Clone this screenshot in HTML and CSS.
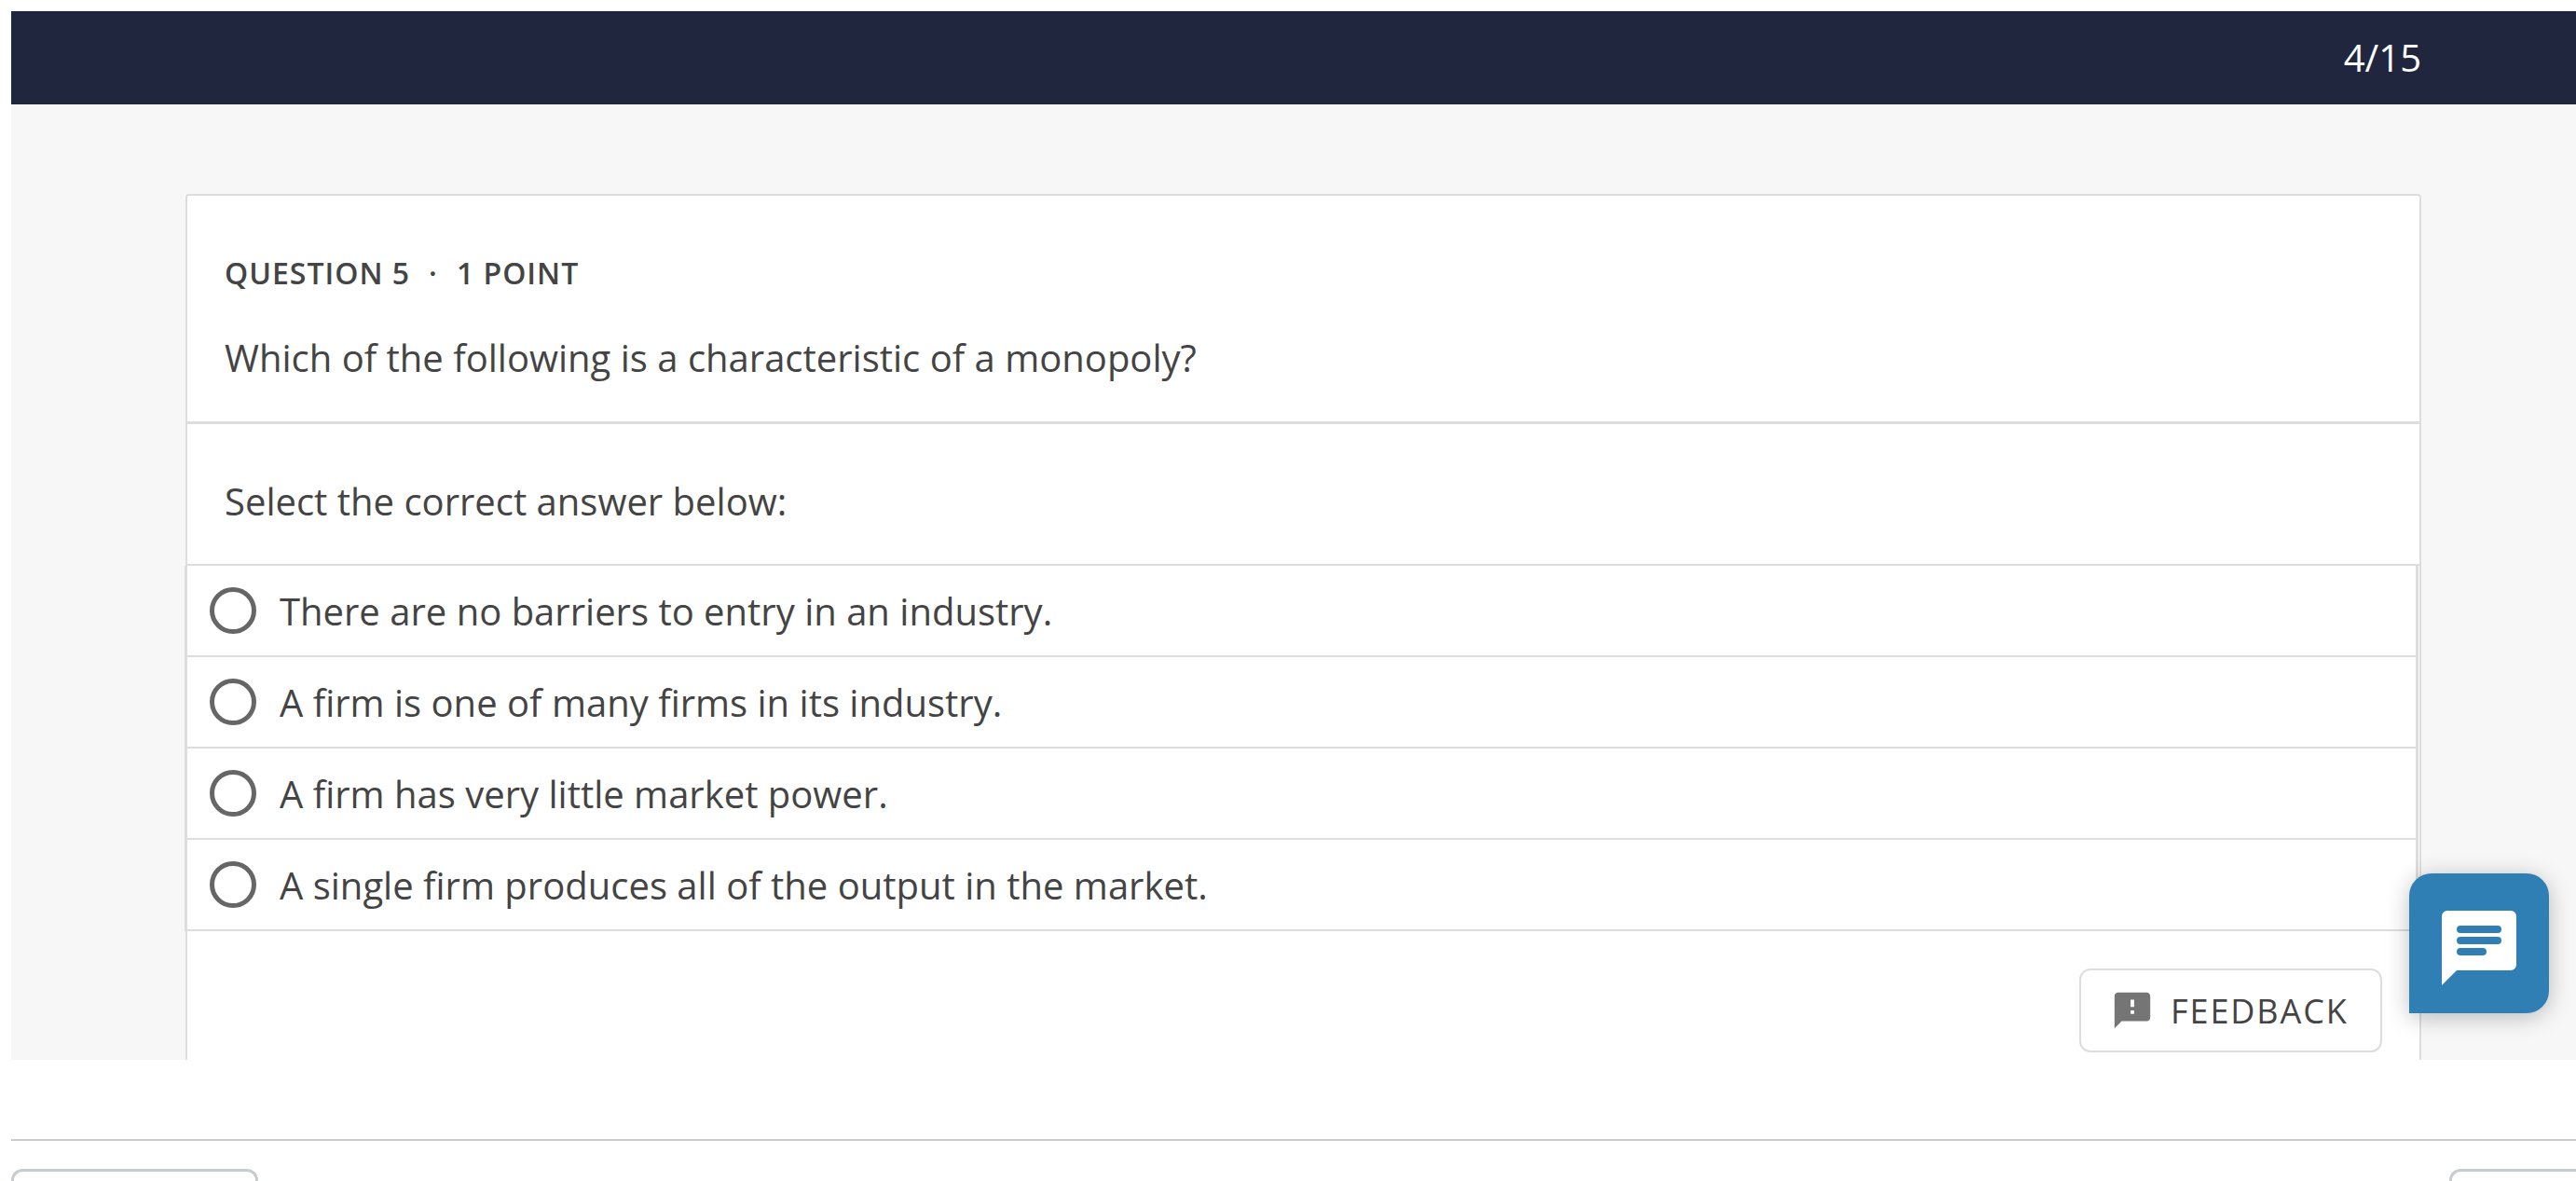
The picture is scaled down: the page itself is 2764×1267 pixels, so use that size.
FILE: index.html
```html
<!DOCTYPE html>
<html lang="en">
<head>
<meta charset="utf-8">
<title>Question 5</title>
<link rel="stylesheet" href="styles.css">
</head>
<body>
<header class="topbar"><span class="progress">4/15</span></header>
<main class="stage">
  <section class="card">
    <div class="prompt">
      <div class="eyebrow">QUESTION 5<span class="dot">·</span>1 POINT</div>
      <p class="question">Which of the following is a characteristic of a monopoly?</p>
    </div>
    <div class="instruction">Select the correct answer below:</div>
    <ul class="options">
      <li class="option"><span class="radio"></span><span>There are no barriers to entry in an industry.</span></li>
      <li class="option"><span class="radio"></span><span>A firm is one of many firms in its industry.</span></li>
      <li class="option"><span class="radio"></span><span>A firm has very little market power.</span></li>
      <li class="option"><span class="radio"></span><span>A single firm produces all of the output in the market.</span></li>
    </ul>
    <div class="actions">
      <button class="feedback" type="button">
        <svg class="feedback-icon" viewBox="0 0 24 24" aria-hidden="true"><path d="M20 2H4c-1.1 0-1.99.9-1.99 2L2 22l4-4h14c1.1 0 2-.9 2-2V4c0-1.1-.9-2-2-2zm-7 12h-2v-2h2v2zm0-4h-2V6h2v4z"/></svg>
        <span>FEEDBACK</span>
      </button>
    </div>
  </section>
</main>
<footer class="footer">
  <div class="footer-buttons">
    <button class="nav-btn nav-prev" type="button"></button>
    <button class="nav-btn nav-next" type="button"></button>
  </div>
</footer>
<button class="chat" type="button" aria-label="Chat">
  <svg class="chat-icon" viewBox="0 0 80 80" aria-hidden="true">
    <path class="bubble" d="M6 0H74a6 6 0 0 1 6 6V58a6 6 0 0 1-6 6H16L0 80V6a6 6 0 0 1 6-6z"/>
    <rect class="bar" x="16" y="16" width="48" height="8" rx="4"/>
    <rect class="bar" x="16" y="28" width="48" height="8" rx="4"/>
    <rect class="bar" x="16" y="40" width="32" height="8" rx="4"/>
  </svg>
</button>
</body>
</html>
```
FILE: styles.css
```css
* { box-sizing: border-box; }
html, body { height: 100%; }
body {
  margin: 0;
  padding: 12px 0 0 12px;
  overflow: hidden;
  background: #fff;
  color: #444;
  font-family: "Open Sans", sans-serif;
  font-size: 40px;
}
.topbar {
  height: 100px;
  background: #20263d;
  color: #fff;
  display: flex;
  align-items: center;
  justify-content: flex-end;
  padding-right: 166px;
}
.progress { font-size: 40px; line-height: 48px; }
.stage {
  height: 1025px;
  overflow: hidden;
  background: #f7f7f7;
  padding: 96px 166px 0 187px;
}
.card {
  background: #fff;
  border: 2px solid #ddd;
  border-radius: 4px;
}
.prompt {
  padding: 61px 40px 0;
  height: 245px;
  border-bottom: 3px solid #ddd;
}
.eyebrow {
  font-size: 32px;
  line-height: 44px;
  font-weight: 600;
  letter-spacing: 1px;
}
.dot { margin: 0 20px; }
.question { margin: 41px 0 0; line-height: 56px; }
.instruction {
  height: 152px;
  padding: 14px 40px 0;
  display: flex;
  align-items: center;
  border-bottom: 2px solid #ddd;
}
.options {
  list-style: none;
  margin: 0 1px 0 -3px;
  padding: 0;
  border-left: 3px solid #ddd;
  border-right: 3px solid #ddd;
}
.option {
  height: 98px;
  display: flex;
  align-items: center;
  gap: 25px;
  padding-left: 24px;
  border-bottom: 2px solid #ddd;
}
.radio {
  width: 50px;
  height: 50px;
  border: 5px solid #666;
  border-radius: 50%;
  flex: none;
}
.actions {
  display: flex;
  justify-content: flex-end;
  padding: 40px 40px 60px;
}
.feedback {
  width: 325px;
  height: 90px;
  display: flex;
  align-items: center;
  gap: 18px;
  padding: 0 0 0 32px;
  background: #fff;
  border: 2px solid #ddd;
  border-radius: 12px;
  color: #444;
  font: 400 36px "Open Sans", sans-serif;
  letter-spacing: 1.9px;
}
.feedback-icon { width: 46px; height: 46px; fill: #757575; flex: none; }
.footer {
  padding-top: 85px;
}
.footer-buttons {
  border-top: 2px solid #c8ccd0;
  padding-top: 30px;
  display: flex;
  justify-content: space-between;
}
.nav-btn {
  height: 60px;
  background: #fff;
  border: 3px solid #c8ccd0;
  border-radius: 12px;
  flex: none;
}
.nav-prev { width: 265px; }
.nav-next { width: 200px; margin-right: -64px; }
.chat {
  position: fixed;
  left: 2585px;
  top: 937px;
  width: 150px;
  height: 150px;
  padding: 10px 0 0;
  border: 0;
  border-radius: 24px 24px 24px 0;
  background: #2f7fb5;
  box-shadow: 0 4px 24px rgba(0, 0, 0, 0.25);
  display: flex;
  align-items: center;
  justify-content: center;
}
.chat-icon { width: 80px; height: 80px; display: block; }
.bubble { fill: #fff; }
.bar { fill: #2f7fb5; }
```
